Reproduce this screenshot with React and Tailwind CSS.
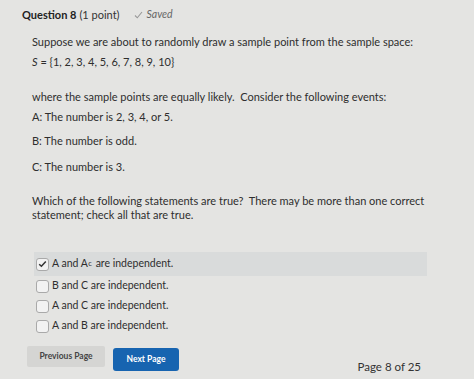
export default function App() {
  const opts = [
    { label: <>A and A<sup className="text-[7.5px] relative -top-[1px] ml-[0.5px] mr-[1px]">c</sup> are independent.</>, checked: true },
    { label: "B and C are independent.", checked: false },
    { label: "A and C are independent.", checked: false },
    { label: "A and B are independent.", checked: false },
  ];
  return (
    <div className="w-[474px] h-[379px] overflow-hidden bg-[#e4e4e2] text-[#2e2e2e] relative" style={{ fontFamily: "Lato, 'Open Sans', sans-serif" }}>
      <div className="flex items-center pl-[22px] pt-[8px] h-[22px]">
        <span className="text-[11px] font-bold text-[#222]">Question 8</span>
        <span className="text-[11px] ml-[3px] text-[#333]">(1 point)</span>
        <span className="ml-[14px] text-[10.5px] italic text-[#666] flex items-center gap-[4px]">
          <svg width="9" height="8" viewBox="0 0 9 8"><path d="M1 4.5 L3.3 6.8 L8 1" fill="none" stroke="#999" strokeWidth="1.1" /></svg>
          Saved
        </span>
      </div>
      <div className="pl-[32px] text-[11px] leading-[14px]">
        <div className="mt-[13px]">Suppose we are about to randomly draw a sample point from the sample space:</div>
        <div className="mt-[6px]"><span className="italic">S</span> = {"{"}1, 2, 3, 4, 5, 6, 7, 8, 9, 10{"}"}</div>
        <div className="mt-[21px]">where the sample points are equally likely.&nbsp; Consider the following events:</div>
        <div className="mt-[6px]">A: The number is 2, 3, 4, or 5.</div>
        <div className="mt-[10px]">B: The number is odd.</div>
        <div className="mt-[12px]">C: The number is 3.</div>
        <div className="mt-[20px] pr-[36px]">Which of the following statements are true?&nbsp; There may be more than one correct statement; check all that are true.</div>
      </div>
      <div className="mt-[30px] flex flex-col">
        {opts.map((o, i) => (
          <div key={i} className={`flex items-center ml-[34px] w-[393px] ${o.checked ? "bg-[#d9dbdb] h-[24px]" : "h-[20px]"}`}>
            <div className="ml-[2px] w-[13px] h-[13px] rounded-[3px] border border-[#a9a9a9] bg-[#f2f2f2] flex items-center justify-center">
              {o.checked && (
                <svg width="9" height="8" viewBox="0 0 9 8"><path d="M1.2 4.2 L3.4 6.3 L7.8 1.5" fill="none" stroke="#333" strokeWidth="1.5" /></svg>
              )}
            </div>
            <span className="ml-[3px] text-[10.5px]">{o.label}</span>
          </div>
        ))}
      </div>
      <div className="flex items-start pl-[27px] mt-[10px]">
        <div className="w-[78px] h-[21px] bg-[#d5d5d3] rounded-[2px] flex items-center justify-center text-[8.5px] font-bold text-[#444]">Previous Page</div>
        <div className="ml-[8px] mt-[2px] w-[66px] h-[23px] bg-[#1764b0] rounded-[3px] flex items-center justify-center text-[8.5px] font-bold text-white">Next Page</div>
        <div className="ml-auto mr-[53px] mt-[12px] text-[11.5px] text-[#333]">Page 8 of 25</div>
      </div>
    </div>
  );
}
